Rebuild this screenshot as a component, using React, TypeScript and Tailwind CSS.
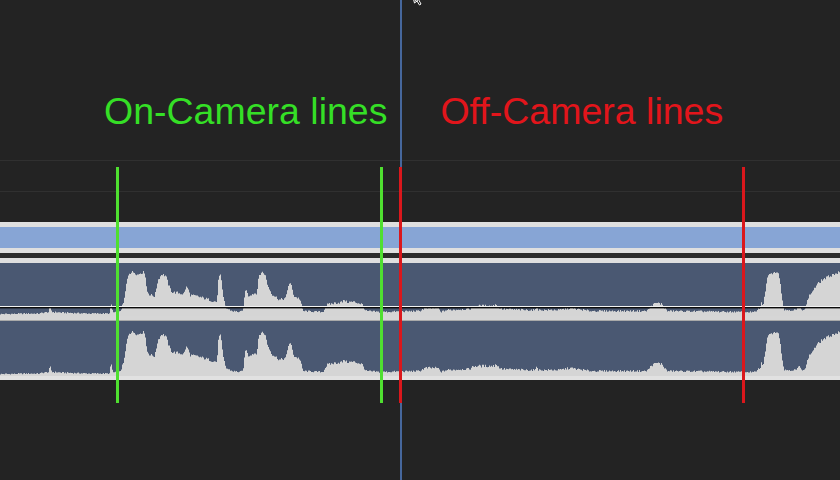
import React from "react";

const KEYS: [number, number][] = [
  [0, 2], [40, 2.5], [44, 3.5], [49, 4], [50, 10], [52, 4], [60, 3.5], [88, 2.5], [110, 2.5], [111, 14], [113, 3.5],
  [119, 3.5], [121, 6], [124, 14], [127, 35], [129, 43], [134, 44], [138, 41], [140, 43], [145, 44], [147, 25],
  [150, 21], [155, 20], [158, 36], [162, 42], [166, 40], [169, 30], [172, 24], [184, 22], [186, 29], [188, 28],
  [190, 21], [200, 19], [210, 16], [217, 14], [219, 42], [221, 40], [223, 20], [226, 8], [232, 5], [240, 4],
  [243, 5], [246, 29], [248, 20], [252, 22], [257, 23], [259, 40], [262, 44], [265, 42], [268, 30], [272, 22],
  [280, 16], [286, 18], [289, 33], [291, 32], [294, 20], [300, 17], [303, 5], [323, 4], [327, 11], [335, 13],
  [343, 14], [345, 17], [346, 14], [355, 14], [362, 12], [366, 5], [380, 4], [420, 5], [425, 8], [438, 8],
  [441, 4], [447, 6], [470, 7], [474, 10], [495, 10], [496, 14], [497, 10], [502, 7], [525, 6], [536, 6],
  [537, 13], [538, 6], [560, 6], [570, 8], [590, 5], [647, 5], [652, 11], [657, 13], [662, 12], [667, 5],
  [745, 4], [757, 4], [759, 10], [760, 4], [762, 16], [763, 8], [765, 22], [767, 36], [770, 44], [773, 42],
  [776, 45], [779, 43], [782, 20], [784, 6], [797, 6], [799, 11], [801, 6], [806, 8], [808, 18], [812, 24],
  [817, 31], [822, 36], [828, 39], [834, 42], [840, 44],
];

function interp(x: number): number {
  for (let i = 0; i < KEYS.length - 1; i++) {
    const [x0, h0] = KEYS[i];
    const [x1, h1] = KEYS[i + 1];
    if (x >= x0 && x <= x1) {
      const t = x1 === x0 ? 0 : (x - x0) / (x1 - x0);
      return h0 + (h1 - h0) * t;
    }
  }
  return KEYS[KEYS.length - 1][1];
}

function hash(n: number): number {
  const s = Math.sin(n * 12.9898 + 78.233) * 43758.5453;
  return s - Math.floor(s);
}

function wavePath(base: number): string {
  let d = `M0,${base}`;
  for (let x = 0; x < 840; x++) {
    const h0 = interp(x + 0.5);
    const j = (hash(x) - 0.5) * Math.min(3, h0 * 0.22 + 0.8);
    const h = Math.max(0.5, h0 + j);
    const y = (base - h).toFixed(1);
    d += ` L${x},${y} L${x + 1},${y}`;
  }
  d += ` L840,${base} Z`;
  return d;
}

function Channel({ height, volume }: { height: number; volume?: boolean }) {
  const base = height;
  return (
    <div className="bg-[#4a5872]" style={{ height }}>
      <svg width="840" height={height} className="block">
        <path d={wavePath(base)} fill="#d5d5d5" />
        {volume && (
          <>
            <rect x="0" y="43" width="840" height="1" fill="#f2f2f2" />
            <rect x="0" y="44" width="840" height="1.4" fill="#0b0b0b" />
          </>
        )}
      </svg>
    </div>
  );
}

export default function App() {
  return (
    <div
      className="relative w-[840px] h-[480px] overflow-hidden bg-[#232323]"
      style={{ fontFamily: '"Liberation Sans", Arial, sans-serif' }}
    >
      <div className="flex flex-col">
        <div className="h-[93px]" />
        <div className="flex h-[38px] pl-[104px] gap-[53px] text-[37.5px] leading-none whitespace-nowrap">
          <span className="text-[#35df26]">On-Camera lines</span>
          <span className="text-[#e2151b]">Off-Camera lines</span>
        </div>
        <div className="h-[29px]" />
        <div className="h-px bg-[#303030]" />
        <div className="h-[30px]" />
        <div className="h-px bg-[#303030]" />
        <div className="h-[30px]" />
        <div className="h-[5px] bg-[#dfdfdf]" />
        <div className="h-[21px] bg-[#87a5d5]" />
        <div className="h-[5px] bg-[#dfdfdf]" />
        <div className="h-[5px] bg-[#2c2c2c]" />
        <div className="h-[5px] bg-[#dfdfdf]" />
        <Channel height={53} volume />
        <div className="h-[4px] bg-[#d6d6d6]" />
        <div className="h-px bg-[#a9a9a9]" />
        <Channel height={55} />
        <div className="h-[4px] bg-[#e1e1e1]" />
      </div>

      {/* playhead */}
      <div className="absolute left-[400px] top-0 h-[480px] w-[2px] bg-[#46679c]" />

      {/* marker lines */}
      <div className="absolute left-[116px] top-[167px] h-[236px] w-[3px] bg-[#4fdf30]" />
      <div className="absolute left-[380px] top-[167px] h-[236px] w-[3px] bg-[#4fdf30]" />
      <div className="absolute left-[399px] top-[167px] h-[236px] w-[3px] bg-[#da171c]" />
      <div className="absolute left-[742px] top-[167px] h-[236px] w-[3px] bg-[#da171c]" />

      {/* mouse cursor (cut off at top) */}
      <svg className="absolute left-[411px] top-0" width="14" height="7" viewBox="0 0 14 7">
        <path d="M2,-3 L5,1.5 L7.5,-0.5 L10,4 L8.5,5 L6,1 L3.5,3 Z" fill="#111" stroke="#fff" strokeWidth="1" />
      </svg>
    </div>
  );
}
